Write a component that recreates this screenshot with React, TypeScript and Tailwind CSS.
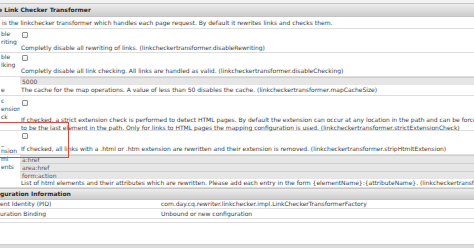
import React from 'react';

// one row of the configuration table: a clipped label column and a value column
type RowProps = {
  labels: string[];
  labelTop: string;
  className: string;
  children: React.ReactNode;
};

const Row: React.FC<RowProps> = ({ labels, labelTop, className, children }) => (
  <div className={`grid grid-cols-[20px_1fr] border-b border-[#dedede] ${className}`}>
    <div className={`overflow-hidden whitespace-nowrap pl-[1px] text-[#444] ${labelTop}`}>
      {labels.map((l, i) => (
        <div key={i} className="h-[8px]">
          {l}
        </div>
      ))}
    </div>
    <div className="min-w-0 whitespace-nowrap">{children}</div>
  </div>
);

const Checkbox: React.FC<{ className?: string }> = ({ className = '' }) => (
  <div
    className={`ml-[2px] h-[6px] w-[6px] rounded-[1px] border border-[#8e8e8e] bg-gradient-to-b from-white to-[#e9e9e9] ${className}`}
  />
);

const Field: React.FC<{ value: string }> = ({ value }) => (
  <div className="h-[8px] border-t border-[#cfcfcf] bg-[#e6e6e6] pl-[2px] leading-[7px] text-[#555]">{value}</div>
);

const SectionHeader: React.FC<{ title: string; className: string }> = ({ title, className }) => (
  <div
    className={`flex items-center border-y border-[#c4c4c4] bg-gradient-to-b from-[#ededed] to-[#cdcdcd] font-bold text-[#2b2b2b] ${className}`}
  >
    {title}
  </div>
);

export default function App() {
  return (
    <div className="relative h-[248px] w-[474px] overflow-hidden bg-white font-['DejaVu_Sans',sans-serif] text-[6px] leading-[8px] text-[#3c3c3c]">
      <div className="h-[3px] bg-[#f3f3f3]" />
      <SectionHeader title="e Link Checker Transformer" className="h-[14px] -ml-[2px]" />

      {/* description */}
      <div className="flex h-[12px] items-center whitespace-nowrap border-b border-[#dedede] pl-[2px]">
        is the linkchecker transformer which handles each page request. By default it rewrites links and checks them.
      </div>

      <Row labels={['ble', 'riting']} labelTop="pt-[1px]" className="h-[24px]">
        <Checkbox className="mt-[3px]" />
        <div className="mt-[6px] pl-[1px]">
          Completly disable all rewriting of links. (linkcheckertransformer.disableRewriting)
        </div>
      </Row>

      <Row labels={['ble', 'lking']} labelTop="pt-[0px]" className="h-[24px]">
        <Checkbox className="mt-[2px]" />
        <div className="mt-[6px] pl-[1px]">
          Completly disable all link checking. All links are handled as valid. (linkcheckertransformer.disableChecking)
        </div>
      </Row>

      <Row labels={['', 'e']} labelTop="pt-[1px]" className="h-[19px]">
        <Field value="5000" />
        <div className="mt-[1px] pl-[1px]">
          The cache for the map operations. A value of less than 50 disables the cache. (linkcheckertransformer.mapCacheSize)
        </div>
      </Row>

      <Row labels={['c', 'ension', 'ck']} labelTop="pt-[1px]" className="h-[35px]">
        <Checkbox className="mt-[4px]" />
        <div className="mt-[10px] pl-[1px]">
          If checked, a strict extension check is performed to detect HTML pages. By default the extension can occur at
          any location in the path and can be forced
        </div>
        <div className="pl-[1px]">
          to be the last element in the path. Only for links to HTML pages the mapping configuration is used.
          (linkcheckertransformer.strictExtensionCheck)
        </div>
      </Row>

      <Row labels={['', '_', 'nsion']} labelTop="pt-[0px]" className="h-[24px]">
        <Checkbox className="mt-[2px]" />
        <div className="mt-[6px] pl-[1px]">
          If checked, all links with a .html or .htm extension are rewritten and their extension is removed.
          (linkcheckertransformer.stripHtmltExtension)
        </div>
      </Row>

      <Row labels={['ml', 'ents']} labelTop="pt-[0px]" className="h-[33px]">
        <Field value="a:href" />
        <Field value="area:href" />
        <Field value="form:action" />
        <div className="pl-[1px]">
          List of html elements and their attributes which are rewritten. Please add each entry in the form
          {' {elementName}:{attributeName}. (linkcheckertransformer.rewriteElements)'}
        </div>
      </Row>

      <SectionHeader title="guration Information" className="h-[12px]" />

      <div className="grid h-[9px] grid-cols-[161px_1fr] items-center whitespace-nowrap border-b border-[#dedede]">
        <div>ent Identity (PID)</div>
        <div>com.day.cq.rewriter.linkchecker.impl.LinkCheckerTransformerFactory</div>
      </div>
      <div className="grid h-[10px] grid-cols-[161px_1fr] items-center whitespace-nowrap border-b border-[#dedede]">
        <div>uration Binding</div>
        <div>Unbound or new configuration</div>
      </div>
      <div className="h-[4px] border-b border-[#dedede]" />

      <div className="h-[21px]" />
      <div className="h-[6px] border-t border-[#cfcfcf] bg-[#dcdcdc]" />

      {/* annotation box drawn over the screenshot */}
      <div className="absolute left-[-4px] top-[122px] h-[36px] w-[73px] border-[1.5px] border-[#e0453e]" />
    </div>
  );
}
